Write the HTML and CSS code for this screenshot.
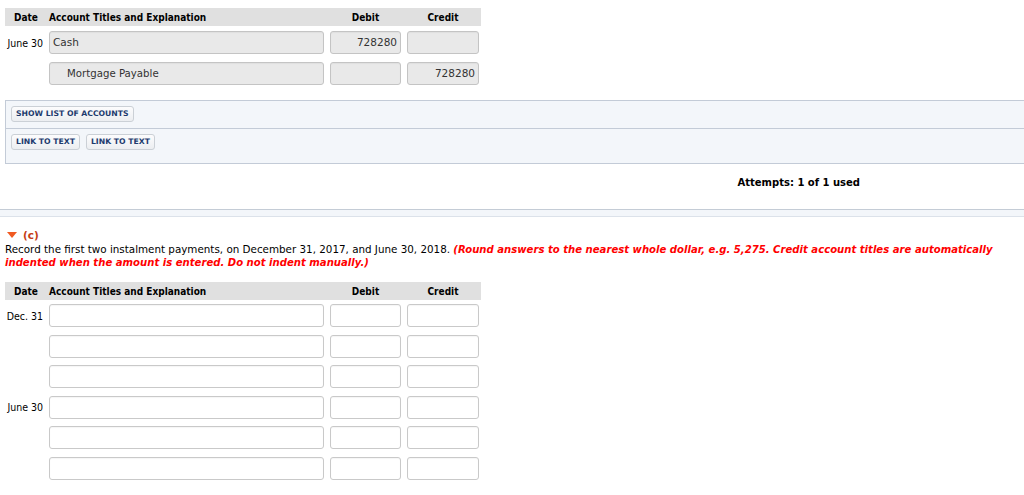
FILE: index.html
```html
<!DOCTYPE html>
<html>
<head>
<meta charset="utf-8">
<link rel="stylesheet" href="styles.css">
</head>
<body>
<div class="journal journal-top">
  <div class="jhead">
    <div class="c-date">Date</div>
    <div class="c-acct">Account Titles and Explanation</div>
    <div class="c-num">Debit</div>
    <div class="c-num c-last">Credit</div>
  </div>
  <div class="jrow">
    <div class="c-date dlabel">June 30</div>
    <div class="field f-acct filled">Cash</div>
    <div class="field f-num filled">728280</div>
    <div class="field f-num f-last filled"></div>
  </div>
  <div class="jrow">
    <div class="c-date dlabel"></div>
    <div class="field f-acct filled indent">Mortgage Payable</div>
    <div class="field f-num filled"></div>
    <div class="field f-num f-last filled">728280</div>
  </div>
</div>

<div class="toolpanel">
  <div class="toolrow">
    <button class="btn">Show List of Accounts</button>
  </div>
  <div class="toolrow toolrow-links">
    <button class="btn">Link to Text</button>
    <button class="btn">Link to Text</button>
  </div>
</div>

<div class="attempts">Attempts: 1 of 1 used</div>

<div class="separator"></div>

<div class="part">
  <div class="part-title"><span class="tri"></span><span class="part-label">(c)</span></div>
  <p class="prompt">Record the first two instalment payments, on December 31, 2017, and June 30, 2018. <em class="note">(Round answers to the nearest whole dollar, e.g. 5,275. Credit account titles are automatically<br>indented when the amount is entered. Do not indent manually.)</em></p>
</div>

<div class="journal journal-bottom">
  <div class="jhead">
    <div class="c-date">Date</div>
    <div class="c-acct">Account Titles and Explanation</div>
    <div class="c-num">Debit</div>
    <div class="c-num c-last">Credit</div>
  </div>
  <div class="jrow">
    <div class="c-date dlabel">Dec. 31</div>
    <div class="field f-acct"></div>
    <div class="field f-num"></div>
    <div class="field f-num f-last"></div>
  </div>
  <div class="jrow">
    <div class="c-date dlabel"></div>
    <div class="field f-acct"></div>
    <div class="field f-num"></div>
    <div class="field f-num f-last"></div>
  </div>
  <div class="jrow">
    <div class="c-date dlabel"></div>
    <div class="field f-acct"></div>
    <div class="field f-num"></div>
    <div class="field f-num f-last"></div>
  </div>
  <div class="jrow">
    <div class="c-date dlabel">June 30</div>
    <div class="field f-acct"></div>
    <div class="field f-num"></div>
    <div class="field f-num f-last"></div>
  </div>
  <div class="jrow">
    <div class="c-date dlabel"></div>
    <div class="field f-acct"></div>
    <div class="field f-num"></div>
    <div class="field f-num f-last"></div>
  </div>
  <div class="jrow">
    <div class="c-date dlabel"></div>
    <div class="field f-acct"></div>
    <div class="field f-num"></div>
    <div class="field f-num f-last"></div>
  </div>
</div>
</body>
</html>
```

FILE: styles.css
```css
* { box-sizing: border-box; }

body {
  margin: 0;
  font-family: "DejaVu Sans", Verdana, sans-serif;
  font-size: 11px;
  color: #000;
  background: #fff;
}

/* journal tables */
.journal {
  margin-left: 5px;
  width: 476px;
}
.journal-top { padding-top: 8px; }
.journal-bottom { margin-top: 13px; }

.jhead {
  display: flex;
  align-items: center;
  height: 18px;
  background: #e0e0e0;
  font-family: "DejaVu Sans Condensed", "DejaVu Sans", sans-serif;
  font-weight: bold;
  font-size: 10px;
  margin-bottom: 5px;
}
.journal-bottom .jhead { margin-bottom: 4px; }
.jhead .c-date { padding-left: 9px; }
.c-date { width: 44px; flex: none; }
.c-acct { width: 275px; margin-right: 6px; flex: none; }
.c-num { width: 71px; margin-right: 6px; flex: none; text-align: center; }
.c-last { width: 72px; margin-right: 0; }

.jrow {
  display: flex;
  align-items: center;
  margin-bottom: 8px;
}
.journal-bottom .jrow { margin-bottom: 7.6px; }

.dlabel {
  text-align: right;
  padding-right: 6px;
  font-family: "DejaVu Sans Condensed", "DejaVu Sans", sans-serif;
  font-size: 10.5px;
}

.field {
  height: 23px;
  flex: none;
  border: 1px solid #c9c9c9;
  border-radius: 3px;
  background: #fff;
  padding: 0 3px;
  line-height: 21px;
  font-size: 10.5px;
  color: #333;
  box-shadow: inset 0 1px 1px rgba(0,0,0,0.04);
}
.field.filled { background: #e9e9e9; border-color: #c4c4c4; }
.f-acct { width: 275px; margin-right: 6px; }
.f-num { width: 71px; margin-right: 6px; text-align: right; }
.f-last { width: 72px; margin-right: 0; }
.indent { padding-left: 17px; font-size: 10.2px; }

/* tool panel */
.toolpanel {
  margin: 15px 0 0 5px;
  border: 1px solid #c3cbd7;
  border-right: none;
  background: #f3f6fa;
}
.toolrow {
  height: 27px;
  padding: 5px 5px 0;
  display: flex;
  gap: 6px;
}
.toolrow-links {
  height: 35px;
  border-top: 1px solid #c3cbd7;
}
.btn {
  height: 16px;
  padding: 0 4px;
  border: 1px solid #cbd0d6;
  border-radius: 3px;
  background: linear-gradient(#fcfcfd, #eceef1);
  font-family: "DejaVu Sans", Verdana, sans-serif;
  font-weight: bold;
  font-size: 7.7px;
  text-transform: uppercase;
  color: #1d3b6e;
  line-height: 14px;
  cursor: pointer;
}

/* attempts */
.attempts {
  height: 45px;
  padding-right: 164px;
  text-align: right;
  font-weight: bold;
  font-size: 10px;
  line-height: 37px;
}

.separator {
  height: 8px;
  border-top: 1px solid #c4ccd6;
  border-bottom: 1px solid #dce2ea;
  background: #f3f6fa;
}

/* part c */
.part { padding: 13px 0 0 5px; }
.part-title {
  display: flex;
  align-items: center;
  height: 10px;
  margin-left: 2px;
}
.tri {
  width: 0;
  height: 0;
  border-left: 5px solid transparent;
  border-right: 5px solid transparent;
  border-top: 6px solid #f05a22;
  margin-right: 6px;
}
.part-label {
  font-weight: bold;
  font-size: 10.5px;
  color: #c43d16;
}
.prompt {
  margin: 3px 0 0;
  font-size: 10.35px;
  line-height: 13px;
  color: #000;
}
.note {
  color: #f00;
  font-weight: bold;
  font-style: italic;
  font-size: 10.1px;
}
```
